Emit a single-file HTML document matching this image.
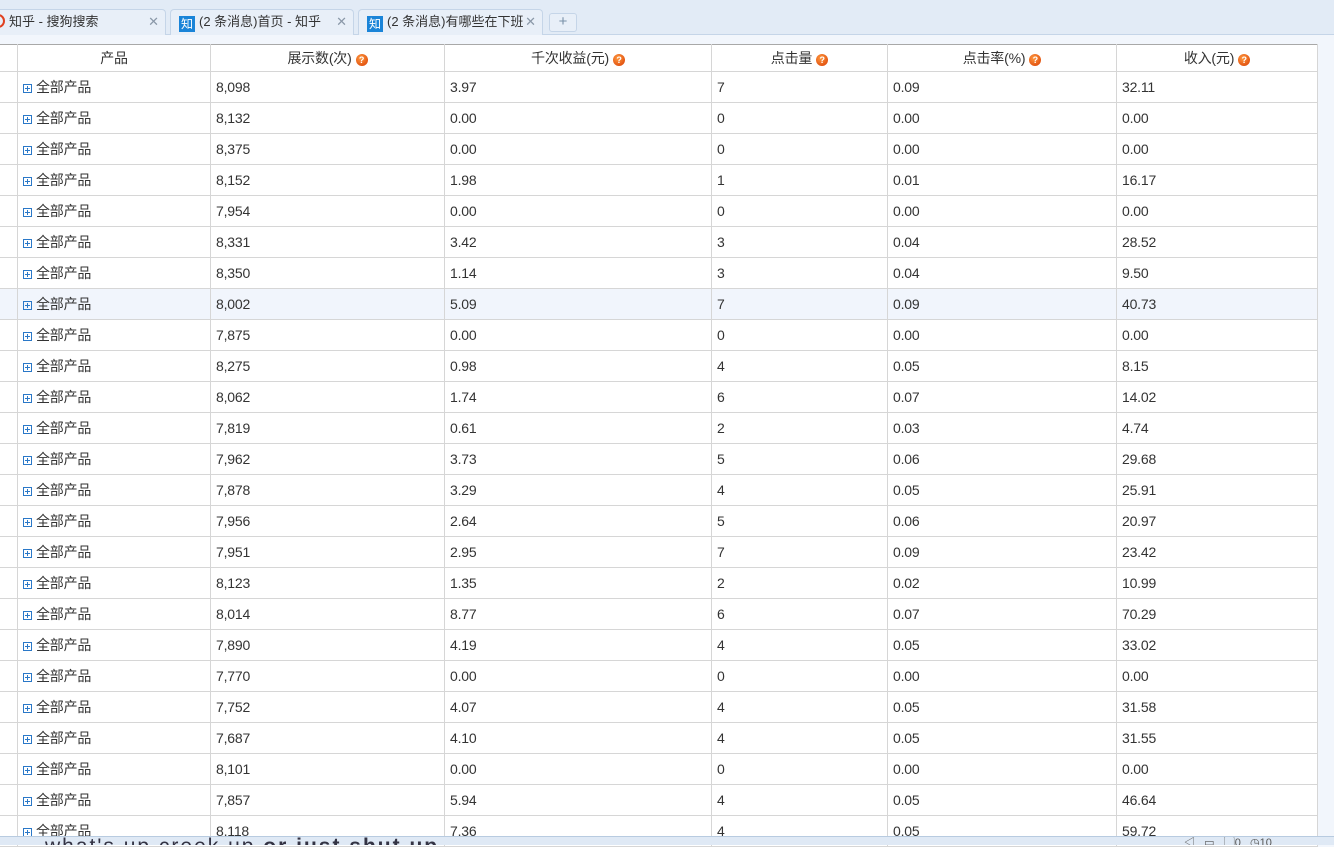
<!DOCTYPE html>
<html><head><meta charset="utf-8"><style>
*{margin:0;padding:0;box-sizing:border-box}
body{width:1334px;height:845px;overflow:hidden;background:#f2f6fc;font-family:"Liberation Sans","Noto Sans CJK SC",sans-serif;position:relative;color:#333}
.tabbar{position:absolute;left:0;top:0;width:1334px;height:35px;background:#e2ebf6;border-bottom:1px solid #c5d5e8}
.tab{position:absolute;top:9px;height:26px;border:1px solid #c5d5e8;border-bottom:none;border-radius:4px 4px 0 0;background:#e8eff8;font-size:13px;line-height:24px;color:#333;padding-left:8px;white-space:nowrap;overflow:hidden}
.tab .x{position:absolute;right:6px;top:0;color:#8a98a8;font-size:13px}
.zi{display:inline-block;width:16px;height:16px;background:#1a84d8;color:#fff;font-size:12px;line-height:16px;text-align:center;vertical-align:-2px;margin-right:4px}
.sg{display:inline-block;width:10px;height:14px;border:2px solid #e04020;border-left:none;border-radius:0 8px 8px 0;vertical-align:-2px;margin-right:4px;margin-left:-8px}
.plus{position:absolute;left:549px;top:13px;width:28px;height:19px;border:1px solid #c5d5e8;border-radius:3px;background:#e8eff8;text-align:center;color:#7890a8;font-size:15px;line-height:16px}
table{position:absolute;left:-2px;top:44px;border-collapse:collapse;background:#fff;table-layout:fixed}
td,th{border:1px solid #d6d6d6;height:31px;font-size:14px;font-weight:normal;padding:0 0 0 5px;text-align:left;white-space:nowrap;overflow:hidden;color:#333;letter-spacing:-0.2px}
th{height:27px;text-align:center;padding:0;border-top:1px solid #a8a8a8}
tr.hl td{background:#f1f5fc}
.q{display:inline-block;width:12px;height:12px;border-radius:50%;background:radial-gradient(circle at 40% 35%,#ff9a40,#d83a00);color:#fff;font-size:9px;line-height:12px;text-align:center;font-weight:bold;vertical-align:0;margin-left:4px}
.pb{display:inline-block;width:9px;height:9px;border:1px solid #2a78c8;position:relative;vertical-align:-1px;margin-right:4px}
.pb:before{content:"";position:absolute;left:1px;top:3px;width:5px;height:1px;background:#2a78c8}
.pb:after{content:"";position:absolute;left:3px;top:1px;width:1px;height:5px;background:#2a78c8}
.status{position:absolute;left:0;top:836px;width:1334px;height:9px;background:#dfe9f5;border-top:1px solid #b8cbe0;overflow:hidden;z-index:2}
.status span{position:absolute;left:45px;top:-2px;font-size:21px;color:#334;letter-spacing:2px;line-height:24px}
</style></head><body>
<div class="tabbar">
<div class="tab" style="left:-6px;width:172px"><span class="sg"></span>知乎 - 搜狗搜索<span class="x">✕</span></div>
<div class="tab" style="left:170px;width:184px"><span class="zi">知</span>(2 条消息)首页 - 知乎<span class="x">✕</span></div>
<div class="tab" style="left:358px;width:185px"><span class="zi">知</span>(2 条消息)有哪些在下班<span class="x">✕</span></div>
<div class="plus">+</div>
</div>
<table>
<colgroup><col style="width:19px"><col style="width:193px"><col style="width:234px"><col style="width:267px"><col style="width:176px"><col style="width:229px"><col style="width:201px"></colgroup>
<tr><th></th><th>产品</th><th>展示数(次)<span class="q">?</span></th><th>千次收益(元)<span class="q">?</span></th><th>点击量<span class="q">?</span></th><th>点击率(%)<span class="q">?</span></th><th>收入(元)<span class="q">?</span></th></tr>
<tr><td></td><td><span class="pb"></span>全部产品</td><td>8,098</td><td>3.97</td><td>7</td><td>0.09</td><td>32.11</td></tr>
<tr><td></td><td><span class="pb"></span>全部产品</td><td>8,132</td><td>0.00</td><td>0</td><td>0.00</td><td>0.00</td></tr>
<tr><td></td><td><span class="pb"></span>全部产品</td><td>8,375</td><td>0.00</td><td>0</td><td>0.00</td><td>0.00</td></tr>
<tr><td></td><td><span class="pb"></span>全部产品</td><td>8,152</td><td>1.98</td><td>1</td><td>0.01</td><td>16.17</td></tr>
<tr><td></td><td><span class="pb"></span>全部产品</td><td>7,954</td><td>0.00</td><td>0</td><td>0.00</td><td>0.00</td></tr>
<tr><td></td><td><span class="pb"></span>全部产品</td><td>8,331</td><td>3.42</td><td>3</td><td>0.04</td><td>28.52</td></tr>
<tr><td></td><td><span class="pb"></span>全部产品</td><td>8,350</td><td>1.14</td><td>3</td><td>0.04</td><td>9.50</td></tr>
<tr class="hl"><td></td><td><span class="pb"></span>全部产品</td><td>8,002</td><td>5.09</td><td>7</td><td>0.09</td><td>40.73</td></tr>
<tr><td></td><td><span class="pb"></span>全部产品</td><td>7,875</td><td>0.00</td><td>0</td><td>0.00</td><td>0.00</td></tr>
<tr><td></td><td><span class="pb"></span>全部产品</td><td>8,275</td><td>0.98</td><td>4</td><td>0.05</td><td>8.15</td></tr>
<tr><td></td><td><span class="pb"></span>全部产品</td><td>8,062</td><td>1.74</td><td>6</td><td>0.07</td><td>14.02</td></tr>
<tr><td></td><td><span class="pb"></span>全部产品</td><td>7,819</td><td>0.61</td><td>2</td><td>0.03</td><td>4.74</td></tr>
<tr><td></td><td><span class="pb"></span>全部产品</td><td>7,962</td><td>3.73</td><td>5</td><td>0.06</td><td>29.68</td></tr>
<tr><td></td><td><span class="pb"></span>全部产品</td><td>7,878</td><td>3.29</td><td>4</td><td>0.05</td><td>25.91</td></tr>
<tr><td></td><td><span class="pb"></span>全部产品</td><td>7,956</td><td>2.64</td><td>5</td><td>0.06</td><td>20.97</td></tr>
<tr><td></td><td><span class="pb"></span>全部产品</td><td>7,951</td><td>2.95</td><td>7</td><td>0.09</td><td>23.42</td></tr>
<tr><td></td><td><span class="pb"></span>全部产品</td><td>8,123</td><td>1.35</td><td>2</td><td>0.02</td><td>10.99</td></tr>
<tr><td></td><td><span class="pb"></span>全部产品</td><td>8,014</td><td>8.77</td><td>6</td><td>0.07</td><td>70.29</td></tr>
<tr><td></td><td><span class="pb"></span>全部产品</td><td>7,890</td><td>4.19</td><td>4</td><td>0.05</td><td>33.02</td></tr>
<tr><td></td><td><span class="pb"></span>全部产品</td><td>7,770</td><td>0.00</td><td>0</td><td>0.00</td><td>0.00</td></tr>
<tr><td></td><td><span class="pb"></span>全部产品</td><td>7,752</td><td>4.07</td><td>4</td><td>0.05</td><td>31.58</td></tr>
<tr><td></td><td><span class="pb"></span>全部产品</td><td>7,687</td><td>4.10</td><td>4</td><td>0.05</td><td>31.55</td></tr>
<tr><td></td><td><span class="pb"></span>全部产品</td><td>8,101</td><td>0.00</td><td>0</td><td>0.00</td><td>0.00</td></tr>
<tr><td></td><td><span class="pb"></span>全部产品</td><td>7,857</td><td>5.94</td><td>4</td><td>0.05</td><td>46.64</td></tr>
<tr><td></td><td><span class="pb"></span>全部产品</td><td>8,118</td><td>7.36</td><td>4</td><td>0.05</td><td>59.72</td></tr>
</table>
<div class="status"><span>what's up creek up <b>or just shut up</b></span>
<div style="position:absolute;right:10px;top:0px;width:140px;height:8px;font-size:11px;line-height:12px;color:#555">◁ &nbsp; ▭ &nbsp; ▢0 &nbsp; ◷10</div></div>
</body></html>
